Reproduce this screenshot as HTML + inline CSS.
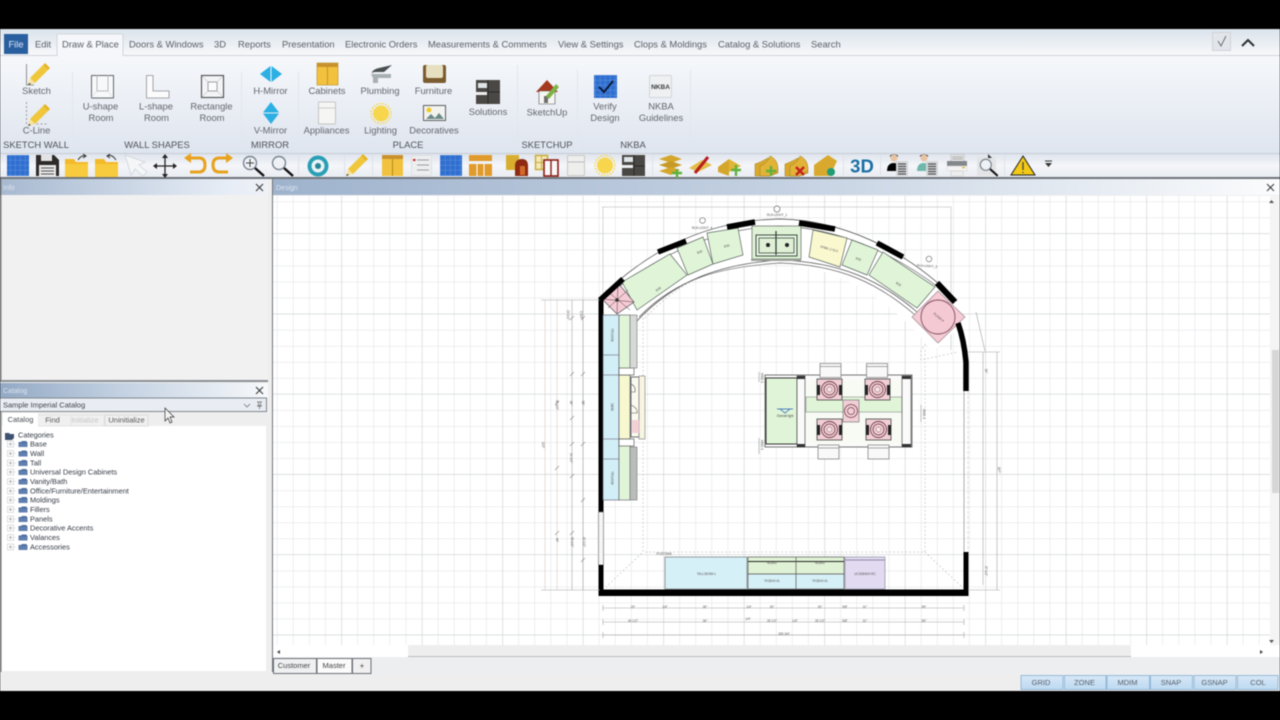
<!DOCTYPE html>
<html lang="en"><head><meta charset="utf-8"><title>Kitchen Design</title>
<style>
html,body{margin:0;padding:0;background:#000;width:1280px;height:720px;overflow:hidden}
svg{display:block;position:absolute;left:0;top:0;filter:blur(.4px)}
text{font-family:"Liberation Sans",sans-serif}
.m{font-size:9.4px;fill:#5a5f66}
.r{font-size:9.4px;fill:#62666c;text-anchor:middle}
.g{font-size:9.4px;fill:#4f5358;text-anchor:middle}
.t{font-size:7.4px;fill:#333a44}
.b{font-size:7.5px;fill:#56606c;text-anchor:middle}
.d{font-size:3.2px;fill:#555;text-anchor:middle}
.dim{stroke:#a3a3a3;stroke-width:.6;fill:none}
.dash{stroke:#bdbdbd;stroke-width:.8;stroke-dasharray:1.5 2.5;fill:none}
</style></head><body>
<svg width="1280" height="720" viewBox="0 0 1280 720" xmlns="http://www.w3.org/2000/svg">
<defs>
<linearGradient id="tab" x1="0" y1="0" x2="0" y2="1"><stop offset="0" stop-color="#dbe3ec"/><stop offset="1" stop-color="#f7f8fa"/></linearGradient>
<linearGradient id="rib" x1="0" y1="0" x2="0" y2="1"><stop offset="0" stop-color="#f6f8fb"/><stop offset="1" stop-color="#dfe5ef"/></linearGradient>
<linearGradient id="tb" x1="0" y1="0" x2="0" y2="1"><stop offset="0" stop-color="#dde3ec"/><stop offset=".5" stop-color="#f4f6f9"/><stop offset="1" stop-color="#e7ebf1"/></linearGradient>
<linearGradient id="ttlc" x1="0" y1="0" x2="1" y2="0"><stop offset="0" stop-color="#9fb3cd"/><stop offset=".5" stop-color="#c4d1e2"/><stop offset="1" stop-color="#fbfcfd"/></linearGradient>
<linearGradient id="ttl" x1="0" y1="0" x2="1" y2="0"><stop offset="0" stop-color="#a7b9d0"/><stop offset=".85" stop-color="#e7edf6"/><stop offset="1" stop-color="#eef1f7"/></linearGradient>
<linearGradient id="ttl2" x1="0" y1="0" x2="1" y2="0"><stop offset="0" stop-color="#93a9c5"/><stop offset=".45" stop-color="#c3d1e2"/><stop offset="1" stop-color="#f7f9fb"/></linearGradient>
<linearGradient id="btn" x1="0" y1="0" x2="0" y2="1"><stop offset="0" stop-color="#d8e8f7"/><stop offset="1" stop-color="#bcd9f1"/></linearGradient>
<pattern id="grid" patternUnits="userSpaceOnUse" x="3.2" y="8.9" width="16.1" height="16.05"><path d="M0 0V16.05M0 0H16.1" stroke="#dedfe1" stroke-width="1" fill="none"/></pattern>
<pattern id="gridm" patternUnits="userSpaceOnUse" x="19.5" y="72.8" width="80.5" height="80.25"><path d="M0 0V80.25M0 0H80.5" stroke="#d0d2d5" stroke-width="1" fill="none"/></pattern>
<pattern id="bg" patternUnits="userSpaceOnUse" width="5" height="5"><rect width="5" height="5" fill="#2f6fd0"/><path d="M0 0V5M0 0H5" stroke="#6d9ce0" stroke-width=".7"/></pattern>
<g id="pencil"><path d="M0 0L13 -13L18 -8L5 5Z" fill="#f0c63a"/><path d="M0 0L5 5L-2 7Z" fill="#f6e3a0"/><path d="M-1 5L1 6L-2 7Z" fill="#333"/><path d="M13 -13L15 -15L20 -10L18 -8Z" fill="#e6b422"/></g>
<g id="folder"><path d="M0 4H9L11 7H23V22H0Z" fill="#f3b92a"/><path d="M0 9H23V22H0Z" fill="#f8cb3e"/></g>
<g id="mag"><circle cx="8" cy="8" r="6.5" fill="#eef2f6" stroke="#7c8590" stroke-width="1.4"/><path d="M13 13L22 21" stroke="#111" stroke-width="2.4"/></g>
<g id="arc"><path d="M0 21V9C6 7 9 5 13 3C20 5 23 11 23 18L15 21Z" fill="#d9a92e" stroke="#9c7a1f" stroke-width=".5"/><path d="M5 21V11C10 9 13 6 15 1C21 4 23 8 23 15L15 21Z" fill="#e1b337" stroke="#9c7a1f" stroke-width=".5"/></g>
<g id="fold"><path d="M0 1H2.5L3.5 0H8V1H9V6H0Z" fill="#4f6f9f"/><rect y="2" width="9" height="4" fill="#5f7fb0"/></g>
<g id="plus"><rect x="-3" y="-3" width="6" height="6" fill="#fff" stroke="#c5c8cb" stroke-width=".6"/><path d="M-1.7 0H1.7M0 -1.7V1.7" stroke="#888" stroke-width=".6"/><path d="M3 0H5" stroke="#ccc" stroke-width=".6"/></g>
<g id="person"><circle cx="7" cy="4" r="3.5" fill="#e8c3a2"/><path d="M3 3Q7 -2 11 3L11 1.5Q7 -1 3 1.5Z" fill="#222"/><path d="M0 17Q0 9 7 9Q11 9 12 12V17Z"/><rect x="9" y="7" width="12" height="15" fill="#d5d7da"/><path d="M11 10H19M11 12.5H19M11 15H19M11 17.5H19M11 20H19" stroke="#555" stroke-width="1.2"/></g>
<g id="chair"><rect width="21" height="14" fill="#f9f9f9" stroke="#777" stroke-width=".7"/><path d="M0 3H21" stroke="#888" stroke-width=".8"/></g>
<g id="seat"><rect width="25" height="21" fill="#f1cfd6" stroke="#444" stroke-width=".8"/><rect y="6" width="3" height="10" fill="#222"/><rect x="22" y="6" width="3" height="10" fill="#222"/><circle cx="12.5" cy="10.5" r="8" fill="none" stroke="#703b45" stroke-width=".9"/><circle cx="12.5" cy="10.5" r="5.5" fill="none" stroke="#703b45" stroke-width=".8"/><circle cx="12.5" cy="10.5" r="2.5" fill="#f7e8ea" stroke="#8b5059" stroke-width=".5"/></g>
</defs>

<rect width="1280" height="720" fill="#000"/>
<rect y="29" width="1280" height="662" fill="#f0f0f0"/>

<!-- menu -->
<rect y="29" width="1280" height="26" fill="url(#tab)"/>
<rect y="55" width="1280" height="98" fill="url(#rib)"/>
<path d="M0 55.5H57M123 55.5H1280" stroke="#cfd5dc"/>
<rect x="4" y="34" width="24" height="20" fill="#2a5f9f"/>
<path d="M57 56V34H123V56" fill="#f5f7fa" stroke="#d0d6dd"/>
<text x="16" y="47.5" text-anchor="middle" class="m" style="fill:#d8e6f5">File</text>
<text x="35" y="47.5" class="m">Edit</text>
<text x="62" y="47.5" class="m">Draw &amp; Place</text>
<text x="129" y="47.5" class="m">Doors &amp; Windows</text>
<text x="214" y="47.5" class="m">3D</text>
<text x="238" y="47.5" class="m">Reports</text>
<text x="282" y="47.5" class="m">Presentation</text>
<text x="345" y="47.5" class="m">Electronic Orders</text>
<text x="428" y="47.5" class="m">Measurements &amp; Comments</text>
<text x="558" y="47.5" class="m">View &amp; Settings</text>
<text x="634" y="47.5" class="m">Clops &amp; Moldings</text>
<text x="718" y="47.5" class="m">Catalog &amp; Solutions</text>
<text x="811" y="47.5" class="m">Search</text>
<rect x="1212.5" y="32.5" width="18" height="18" fill="#e2e5ea" stroke="#d0d4da"/>
<path d="M1218 41L1221 46L1226 36" fill="none" stroke="#6d7277" stroke-width="1"/>
<path d="M1242 46L1248 40L1254 46" fill="none" stroke="#2c2f33" stroke-width="2"/>

<!-- ribbon separators -->
<path d="M72.5 72V150M241.5 72V150M298.5 72V150M517.5 65V152M577.5 70V152M690.5 70V152" stroke="#e2e7ee"/>

<!-- sketch -->
<path d="M26.5 64V85H34" fill="none" stroke="#777" stroke-width=".8"/>
<use href="#pencil" x="30" y="78"/>
<path d="M26.5 102V124H48" fill="none" stroke="#888" stroke-width=".8" stroke-dasharray="2 2"/>
<use href="#pencil" x="30" y="119"/>
<text x="36.5" y="94" class="r">Sketch</text>
<text x="36.5" y="133.5" class="r">C-Line</text>

<!-- room shapes -->
<rect x="91.5" y="75.5" width="22" height="22.5" fill="#f7f8fa" stroke="#55585c" stroke-width=".9"/>
<path d="M97 75V91H108V75" fill="none" stroke="#a5a8ad" stroke-width=".8"/>
<path d="M91 98L97 91M113 98L108 91" stroke="#c9ccd1" stroke-width=".5"/>
<path d="M146.5 75.5H153V91H169V98H146.5Z" fill="#fbfbfc" stroke="#8c9095" stroke-width=".8"/>
<rect x="201.5" y="75.5" width="22" height="22" fill="#f3f4f6" stroke="#4c4f53" stroke-width="1.1"/>
<rect x="208" y="82" width="9" height="9" fill="#fbfbfb" stroke="#8b8e93" stroke-width=".8"/>
<path d="M202 76L208 82M223 76L217 82M202 97L208 91M223 97L217 91" stroke="#aaa" stroke-width=".5"/>
<text x="100.5" y="109.5" class="r">U-shape</text><text x="101" y="121" class="r">Room</text>
<text x="156" y="109.5" class="r">L-shape</text><text x="156.5" y="121" class="r">Room</text>
<text x="211.5" y="109.5" class="r">Rectangle</text><text x="212" y="121" class="r">Room</text>
<text x="157" y="148" class="g">WALL SHAPES</text>
<text x="36" y="148" class="g">SKETCH WALL</text>

<!-- mirror -->
<path d="M260 74L270.5 66V82ZM271.5 66L282 74L271.5 82Z" fill="#2cb0e4"/>
<path d="M271 102L279 112.5H263ZM263 113.5H279L271 124Z" fill="#2cb0e4"/>
<text x="270.5" y="94" class="r">H-Mirror</text>
<text x="270.5" y="133.5" class="r">V-Mirror</text>
<text x="270" y="148" class="g">MIRROR</text>

<!-- place -->
<rect x="317" y="63" width="21" height="22" fill="#f2c23f" stroke="#b48a20" stroke-width=".6"/>
<rect x="317" y="63" width="21" height="4" fill="#c8912b"/>
<path d="M327.5 67V85" stroke="#b48a20" stroke-width=".8"/>
<rect x="318.5" y="102" width="17" height="22" rx="1" fill="#f5f5f4" stroke="#c4c4c2"/>
<path d="M319 108H335" stroke="#ccc"/>
<path d="M372 75Q371 72 376 72H384L392 65L379 68Q374 69 372 72Z" fill="#4a4f50"/>
<path d="M371 74H391V78H378V83H373V78Z" fill="#a9b0b2"/>
<rect x="423" y="65" width="23" height="18" rx="2" fill="#7b5b30"/>
<rect x="426" y="65" width="17" height="13" rx="2" fill="#e6dfc0"/>
<circle cx="381" cy="113.5" r="8" fill="#f7d64e"/>
<circle cx="381" cy="113.5" r="10" fill="none" stroke="#f7d64e" stroke-width="1.5" stroke-dasharray="1.5 1.5"/>
<rect x="423.5" y="105.5" width="22" height="15" fill="#f2f2ef" stroke="#5d5f61" stroke-width="1"/>
<circle cx="429" cy="110" r="2.5" fill="#f0c92b"/>
<path d="M426 119L431 114L435 118L439 113L444 119Z" fill="#6b8a87"/>
<rect x="476" y="80" width="24" height="24" fill="#4a4845"/>
<rect x="478" y="83" width="9" height="5" fill="#dfe5e6"/>
<rect x="476" y="92" width="11" height="3" fill="#eef0f0"/>
<path d="M488 80V104M488 92H500" stroke="#2c2b29"/>
<text x="327" y="94" class="r">Cabinets</text>
<text x="380" y="94" class="r">Plumbing</text>
<text x="433.5" y="94" class="r">Furniture</text>
<text x="326.5" y="133.5" class="r">Appliances</text>
<text x="380.5" y="133.5" class="r">Lighting</text>
<text x="434" y="133.5" class="r">Decoratives</text>
<text x="488" y="115" class="r">Solutions</text>
<text x="408" y="148" class="g">PLACE</text>

<!-- sketchup -->
<path d="M536 92L547 80L558 92Z" fill="#a5391f"/>
<path d="M539 91H555V104H539Z" fill="#f6f6f4" stroke="#555" stroke-width=".6"/>
<rect x="544" y="96" width="4" height="7" fill="#6e6e6e"/>
<path d="M546 96L556 84L559 87L549 99Z" fill="#7eb347"/>
<text x="547" y="115.5" class="r">SketchUp</text>
<text x="547" y="148" class="g">SKETCHUP</text>

<!-- NKBA -->
<rect x="594" y="75" width="23" height="23" fill="url(#bg)"/>
<path d="M599 87L604 92L613 81" fill="none" stroke="#0b1530" stroke-width="1.8"/>
<rect x="649.5" y="75.5" width="22" height="22" rx="1" fill="#eef0f1" stroke="#d2d5d8"/>
<text x="660.5" y="89" text-anchor="middle" style="font-size:6.5px;font-weight:bold;fill:#3c3f42">NKBA</text>
<text x="605" y="109.5" class="r">Verify</text><text x="605" y="121" class="r">Design</text>
<text x="661" y="109.5" class="r">NKBA</text><text x="661" y="121" class="r">Guidelines</text>
<text x="633" y="148" class="g">NKBA</text>

<!-- toolbar -->
<rect y="153" width="1280" height="25" fill="url(#tb)"/>
<path d="M0 153.5H1280" stroke="#c7ccd4"/>
<rect y="177" width="1280" height="2" fill="#6f747a"/>
<rect x="7" y="155" width="22" height="21" fill="url(#bg)"/>
<path d="M36 155H54L59 160V176H36Z" fill="#2d2a28"/><rect x="41" y="155" width="11" height="6" fill="#e3e3e3"/><rect x="39" y="165" width="17" height="11" fill="#e8e8e8"/><path d="M41 168H54M41 171H54M41 174H54" stroke="#555"/>
<use href="#folder" x="65" y="155"/><path d="M78 160Q81 155 85 156M83 154L86 156L83 158" fill="none" stroke="#333" stroke-width="1"/>
<use href="#folder" x="95" y="155"/><path d="M116 160Q112 154 108 156M110 154L107 156L110 158" fill="none" stroke="#333" stroke-width="1"/>
<path d="M125 155L131 175L135 169L143 176L147 172L139 165L145 162Z" fill="#f5f6f8" stroke="#ced2d7" stroke-width=".8"/>
<path d="M165 156V176M155 166H175" stroke="#222" stroke-width="1.3"/><path d="M165 154L168 158H162ZM165 178L168 174H162ZM153 166L157 163V169ZM177 166L173 163V169Z" fill="#222"/>
<path d="M188 158H199Q205 158 205 165Q205 172 199 172H190" fill="none" stroke="#e8a21e" stroke-width="3"/><path d="M184 158L191 153V163Z" fill="#e8a21e"/>
<path d="M229 158H219Q213 158 213 165Q213 172 219 172H228" fill="none" stroke="#e8a21e" stroke-width="3"/><path d="M233 158L226 153V163Z" fill="#e8a21e"/>
<use href="#mag" x="242" y="155"/><path d="M246 163H254M250 159V167" stroke="#444"/>
<use href="#mag" x="271" y="155"/>
<circle cx="318" cy="166" r="10.5" fill="#2a9fb5"/><circle cx="318" cy="166" r="6.5" fill="#e8f3f5"/><circle cx="318" cy="166" r="3" fill="#2a8699"/>
<path d="M344.5 156V175M372.5 156V175M298.5 156V175" stroke="#dde1e6"/>
<use href="#pencil" x="348" y="169"/>
<rect x="382" y="155" width="21" height="21" fill="#f2c23f"/><rect x="382" y="155" width="21" height="4" fill="#c8912b"/><path d="M392.5 159V176" stroke="#b48a20"/>
<rect x="411.5" y="155.5" width="20" height="20" rx="1" fill="#eceeef" stroke="#dcdfe1"/><path d="M417 160H429M417 165H429M417 170H429" stroke="#9a9ea1"/><rect x="413" y="159" width="2.5" height="2" fill="#c22"/>
<rect x="440" y="155" width="22" height="21" fill="url(#bg)"/>
<rect x="469" y="155" width="23" height="6" fill="#e09b2c"/><rect x="469" y="164" width="23" height="12" fill="#e09b2c"/><path d="M477 164V176M484 164V176" stroke="#fff"/>
<rect x="506" y="155" width="13" height="15" fill="#d9ad2e"/><path d="M515 176V166Q515 159 522 159Q528 159 528 166V176Z" fill="#8e2a12"/><rect x="520" y="166" width="5" height="9" fill="#d26a2c"/>
<rect x="535.5" y="155.5" width="12" height="14" fill="#f3e9b7" stroke="#c8a93a" stroke-width="1.4"/><path d="M541.5 156V169M536 162.5H547" stroke="#c8a93a"/>
<rect x="544" y="160" width="14" height="16" fill="#f9f9f9" stroke="#8c1c14" stroke-width="1.6"/><path d="M551 160V176" stroke="#8c1c14" stroke-width="1.4"/>
<rect x="567.5" y="155.5" width="17" height="20" rx="1" fill="#eeeeec" stroke="#c8c8c6"/><path d="M568 162H584" stroke="#bbb"/>
<circle cx="605" cy="165.5" r="8" fill="#f7d64e"/><circle cx="605" cy="165.5" r="10" fill="none" stroke="#f7d64e" stroke-width="1.5" stroke-dasharray="1.5 1.5"/>
<rect x="622" y="155" width="23" height="21" fill="#4a4845"/><rect x="624" y="157" width="9" height="5" fill="#dfe5e6"/><rect x="622" y="165" width="11" height="3" fill="#eef0f0"/><path d="M634 155V176M634 166H645" stroke="#2c2b29"/>
<path d="M652.5 156V175M843.5 156V175M880.5 156V175M1004.5 156V175" stroke="#dde1e6"/>
<path d="M659 159L671 155L682 159L671 163Z" fill="#d4a72c"/><path d="M659 165L671 161L682 165L671 169Z" fill="#c69a27"/><path d="M659 171L671 167L680 170L671 175Z" fill="#d4a72c"/><path d="M677 169V178M672 173H682" stroke="#5fb23c" stroke-width="2.4"/>
<path d="M689 168L702 160L712 165L698 172Z" fill="#e3bd4a"/><path d="M695 173L708 157" stroke="#b81e1e" stroke-width="3"/>
<path d="M718 167L729 159V176L718 172Z" fill="#d4a72c"/><path d="M729 159L741 166L729 172Z" fill="#e0b538"/><path d="M736 165V176M731 170H741" stroke="#5fb23c" stroke-width="2.4"/>
<use href="#arc" x="755" y="155"/><path d="M771 166V176M766 171H776" stroke="#5fb23c" stroke-width="2.4"/>
<use href="#arc" x="785" y="155"/><path d="M796 167L804 175M804 167L796 175" stroke="#c51f1f" stroke-width="2.4"/>
<path d="M814 176V165L828 155L837 161L830 176Z" fill="#d9a92e"/><circle cx="831" cy="172" r="4" fill="#1f9c73"/>
<text x="862" y="172.5" text-anchor="middle" style="font-size:18.5px;font-weight:bold;fill:#1a6fa5">3D</text>
<use href="#person" x="887" y="154"/>
<use href="#person" x="917" y="154" fill="#6fb7ab"/>
<rect x="951" y="155" width="13" height="6" fill="#fafafa" stroke="#999" stroke-width=".5"/><path d="M952 157H963M952 159H963" stroke="#777" stroke-width=".8"/>
<rect x="947" y="161" width="20" height="5" fill="#85888b"/><rect x="947" y="166" width="20" height="5" fill="#f3f3f3" stroke="#ccc" stroke-width=".4"/><rect x="951" y="171" width="12" height="5" fill="#ededed" stroke="#bbb" stroke-width=".4"/><rect x="962" y="167" width="3" height="1.2" fill="#e0b030"/>
<rect x="977" y="157" width="19" height="19" fill="#e3e4e5"/><g transform="translate(979 158) scale(.85)"><use href="#mag"/></g><path d="M988 154L992 158H988Z" fill="#333"/>
<path d="M1023 156L1035 175H1011Z" fill="#f2c916" stroke="#1f1f1f" stroke-width="1"/><path d="M1023 162V170" stroke="#444" stroke-width="1.3"/><circle cx="1023" cy="172.5" r=".7" fill="#444"/>
<path d="M1045 161H1052" stroke="#333"/><path d="M1045 163H1052L1048.5 167Z" fill="#333"/>

<!-- left panel -->
<rect y="179" width="272" height="512" fill="#eeeeee"/>
<rect y="179" width="268" height="16" fill="url(#ttl)"/>
<text x="3" y="190" style="font-size:7px;fill:#dbe4ef">Info</text>
<path d="M256 184L263 191M263 184L256 191" stroke="#3a3a3a" stroke-width="1.1"/>
<rect y="195" width="268" height="185" fill="#f1f1f1"/>
<path d="M1 179V380" stroke="#777"/>
<rect y="380" width="268" height="2" fill="#8a8f95"/>
<rect y="383" width="268" height="15" fill="url(#ttl2)"/>
<text x="3" y="393" style="font-size:7px;fill:#dbe4ef">Catalog</text>
<path d="M256 387L263 394M263 387L256 394" stroke="#3a3a3a" stroke-width="1.1"/>
<rect y="398" width="267" height="14" fill="#e9edf3"/>
<path d="M0 398H267M0 411.5H267M266.5 398V412" stroke="#7f8790"/>
<text x="3" y="407.5" style="font-size:7.5px;fill:#3d424a">Sample Imperial Catalog</text>
<path d="M244 404L247 407L250 404" stroke="#777" fill="none" stroke-width=".8"/>
<path d="M257 402H262M258.5 403V406H260.5V403M257 406H262M259.5 406V409" stroke="#555" fill="none" stroke-width=".7"/>
<rect x="2" y="426" width="264" height="245" fill="#fff"/>
<rect x="38" y="415" width="33" height="11" fill="#f0f0f0" stroke="#e4e4e4"/>
<rect x="71" y="415" width="33" height="11" fill="#f0f0f0" stroke="#e4e4e4"/>
<rect x="105" y="415" width="43" height="11" fill="#f0f0f0" stroke="#dcdcdc"/>
<rect x="3" y="413" width="35" height="14" fill="#fff"/>
<text x="20.5" y="422" text-anchor="middle" style="font-size:7.5px;fill:#454a51">Catalog</text>
<text x="52.5" y="422.5" text-anchor="middle" style="font-size:7.5px;fill:#555">Find</text>
<text x="85" y="422.5" text-anchor="middle" style="font-size:7.5px;fill:#c5c5c5">Initialize</text>
<text x="126.5" y="422.5" text-anchor="middle" style="font-size:7.5px;fill:#555">Uninitialize</text>
<path d="M5 433H9L10 434H14V438L12 440H5Z" fill="#3f5170"/>
<text x="18" y="437.5" class="t">Categories</text>
<use href="#plus" x="10.5" y="444"/><use href="#fold" x="18.5" y="441"/><text x="30" y="446.5" class="t">Base</text>
<use href="#plus" x="10.5" y="453.5"/><use href="#fold" x="18.5" y="450.5"/><text x="30" y="456" class="t">Wall</text>
<use href="#plus" x="10.5" y="463"/><use href="#fold" x="18.5" y="460"/><text x="30" y="465.5" class="t">Tall</text>
<use href="#plus" x="10.5" y="472"/><use href="#fold" x="18.5" y="469"/><text x="30" y="474.5" class="t">Universal Design Cabinets</text>
<use href="#plus" x="10.5" y="481.5"/><use href="#fold" x="18.5" y="478.5"/><text x="30" y="484" class="t">Vanity/Bath</text>
<use href="#plus" x="10.5" y="491"/><use href="#fold" x="18.5" y="488"/><text x="30" y="493.5" class="t">Office/Furniture/Entertainment</text>
<use href="#plus" x="10.5" y="500"/><use href="#fold" x="18.5" y="497"/><text x="30" y="502.5" class="t">Moldings</text>
<use href="#plus" x="10.5" y="509.5"/><use href="#fold" x="18.5" y="506.5"/><text x="30" y="512" class="t">Fillers</text>
<use href="#plus" x="10.5" y="519"/><use href="#fold" x="18.5" y="516"/><text x="30" y="521.5" class="t">Panels</text>
<use href="#plus" x="10.5" y="528"/><use href="#fold" x="18.5" y="525"/><text x="30" y="530.5" class="t">Decorative Accents</text>
<use href="#plus" x="10.5" y="537.5"/><use href="#fold" x="18.5" y="534.5"/><text x="30" y="540" class="t">Valances</text>
<use href="#plus" x="10.5" y="547"/><use href="#fold" x="18.5" y="544"/><text x="30" y="549.5" class="t">Accessories</text>
<path d="M165 408V421L168 418L170 423L172 422L170 417H174Z" fill="#f4f4f4" stroke="#333" stroke-width=".7"/>
<path d="M1 412V672" stroke="#777"/>

<!-- canvas -->
<rect x="272" y="179" width="1008" height="495" fill="#f0f0f0"/>
<rect x="273" y="179" width="1007" height="16" fill="url(#ttlc)"/>
<text x="276" y="190" style="font-size:7px;fill:#dbe4ef">Design</text>
<path d="M1267 184L1274 191M1274 184L1267 191" stroke="#3a3a3a" stroke-width="1"/>
<rect x="273" y="196" width="997" height="449" fill="#fff"/>
<rect x="273" y="196" width="997" height="449" fill="url(#grid)"/>
<rect x="273" y="196" width="997" height="449" fill="url(#gridm)"/>
<path d="M272.5 179V672" stroke="#6f747a"/>

<!-- scrollbars -->
<rect x="1270" y="196" width="10" height="449" fill="#f4f4f4"/>
<rect x="1272" y="350" width="7" height="143" fill="#d6d6d6"/>
<path d="M1269 203L1271.5 200L1274 203ZM1269 640L1271.5 643L1274 640Z" fill="#555"/>
<rect x="273" y="645" width="1007" height="12" fill="#fff"/>
<rect x="408" y="645" width="723" height="12" fill="#eeeeee"/>
<path d="M408 656.5H1131" stroke="#bdbdbd"/>
<path d="M280 650V654L277 652ZM1260 650V654L1263 652Z" fill="#444"/>
<rect x="273" y="657" width="1007" height="16" fill="#eceef0"/>
<rect x="273.5" y="658.5" width="43" height="15" fill="#eef0f2" stroke="#6b7077"/>
<rect x="317" y="658.5" width="35" height="15" fill="#fbfbfb" stroke="#6b7077"/>
<rect x="352.5" y="658.5" width="18.5" height="15" fill="#f0f0f0" stroke="#6b7077"/>
<text x="294" y="668" text-anchor="middle" style="font-size:7.5px;fill:#444">Customer</text>
<text x="334" y="668" text-anchor="middle" style="font-size:7.5px;fill:#444">Master</text>
<text x="362" y="668.5" text-anchor="middle" style="font-size:8px;fill:#444">+</text>

<!-- status bar -->
<rect y="674" width="1280" height="17" fill="#eeeeee"/>
<g stroke="#95b9d8" fill="url(#btn)">
<rect x="1021" y="675.5" width="42" height="14"/><rect x="1064.5" y="675.5" width="41.5" height="14"/><rect x="1107" y="675.5" width="42.5" height="14"/><rect x="1150.5" y="675.5" width="42" height="14"/><rect x="1194" y="675.5" width="42" height="14"/><rect x="1237.5" y="675.5" width="40.5" height="14"/>
</g>
<text x="1041" y="685" class="b">GRID</text><text x="1084.5" y="685" class="b">ZONE</text><text x="1127.5" y="685" class="b">MDIM</text><text x="1171" y="685" class="b">SNAP</text><text x="1214.5" y="685" class="b">GSNAP</text><text x="1258" y="685" class="b">COL</text>

<!-- floor plan: guides -->
<path d="M602 207H951V350M603 207V300" fill="none" stroke="#c8c8c8" stroke-width=".7"/>
<path class="dash" d="M645 318Q690 270 748 264Q780 262 810 264Q870 272 922 318Q937 332 921 350V360L958 352"/>
<path class="dash" d="M643 318V552L606 587M925 350V552H643M925 552L962 587"/>

<!-- arc band -->
<path d="M600 298C650 248 710 220 780 219C840 220 905 248 957 301L963 323L933 352C900 310 850 268 780 264C720 262 675 280 636 322L604 318Z" fill="#fff"/>
<path d="M600 298C650 248 710 220 780 219C840 220 905 248 957 301" fill="none" stroke="#444" stroke-width=".7"/>
<path d="M616 289C665 251 720 228 780 226C835 228 890 250 942 290" fill="none" stroke="#666" stroke-width=".7"/>
<path d="M636 322C675 280 720 264 780 260C840 262 880 280 917 312" fill="none" stroke="#555" stroke-width=".8"/>
<path d="M639 317C678 277 722 267 780 263C840 265 878 283 915 315" fill="none" stroke="#666" stroke-width=".7"/>

<!-- arc cabinets -->
<path d="M622 282L670 254L687 275L637 310Z" fill="#e0f5d8" stroke="#5c6660" stroke-width=".7"/>
<path d="M677 248L703 237L713 264L688 275Z" fill="#e0f5d8" stroke="#5c6660" stroke-width=".7"/>
<path d="M707 233L738 228L743 255L713 264Z" fill="#e0f5d8" stroke="#5c6660" stroke-width=".7"/>
<path d="M813 230L847 238L840 267L809 257Z" fill="#f9f8cf" stroke="#5c6660" stroke-width=".7"/>
<path d="M852 240L878 250L867 275L842 265Z" fill="#e0f5d8" stroke="#5c6660" stroke-width=".7"/>
<path d="M883 252L935 287L917 308L869 275Z" fill="#e0f5d8" stroke="#5c6660" stroke-width=".7"/>

<!-- sink cabinet -->
<rect x="752" y="226" width="49" height="33" fill="#e0f2d6" stroke="#666" stroke-width=".7"/>
<rect x="756" y="235" width="41" height="21" fill="#eef4e8" stroke="#34503b" stroke-width="1"/>
<rect x="759" y="238" width="35" height="15" fill="#dff0d6" stroke="#34503b" stroke-width=".8"/>
<path d="M776 231V255" stroke="#2a3a2f" stroke-width="1.2"/><circle cx="768" cy="245" r="2" fill="#222"/><circle cx="787" cy="245" r="2" fill="#222"/>
<rect x="751" y="259" width="50" height="2" fill="#9aa199"/>

<!-- arc labels -->
<text class="d" transform="translate(659 290) rotate(-35)">B36</text>
<text class="d" transform="translate(700 253) rotate(-20)">B30</text>
<text class="d" transform="translate(727 247) rotate(-12)">B30</text>
<text class="d" transform="translate(829 250) rotate(14)">FPBK-2-SLS</text>
<text class="d" transform="translate(858 260) rotate(22)">B30</text>
<text class="d" transform="translate(898 285) rotate(33)">B36</text>

<!-- corner pieces -->
<path d="M618 283L634 302L617 314L602 299Z" fill="#f5ccd6" stroke="#555" stroke-width=".7"/>
<path d="M602 299L634 302M618 283L617 314M606 290L630 310M628 290L608 308" stroke="#553a42" stroke-width=".5"/>
<circle cx="617" cy="300" r="1.8" fill="#333"/>
<path d="M938 291L965 317L938 343L912 317Z" fill="#f5ccd6" stroke="#9d8a8f" stroke-width=".7"/>
<circle cx="938" cy="317" r="17" fill="#f5c9d3" stroke="#7b4d59" stroke-width=".9"/>
<text class="d" transform="translate(938 318) rotate(40)">PLN30-4</text>

<!-- walls -->
<g stroke="#000" fill="none" stroke-width="5.5">
<path d="M600 300L623 279"/>
<path d="M658 252L686 241"/>
<path d="M727 227L755 222"/>
<path d="M799 223L835 229"/>
<path d="M877 243L903 257"/>
<path d="M937 283L955 302" stroke-width="6"/>
<path d="M958 323Q964 340 966 362V391"/>
</g>
<rect x="598.5" y="298" width="5" height="214" fill="#000"/>
<rect x="598.5" y="512" width="5" height="53" fill="#f5f5f5" stroke="#777" stroke-width=".7"/>
<rect x="598.5" y="565" width="5" height="30" fill="#000"/>
<rect x="598.5" y="589.5" width="370" height="6.5" fill="#000"/>
<rect x="963.5" y="552" width="5" height="40" fill="#000"/>
<path d="M964 391V552" stroke="#999" stroke-width=".8"/>
<path d="M968 391V552" stroke="#c8c8c8" stroke-width=".6" stroke-dasharray="3 2"/>

<!-- left run -->
<rect x="603" y="315" width="16" height="185" fill="#d2eef6" stroke="#556" stroke-width=".6"/>
<path d="M603 355H619M603 375H619M603 439H619M603 459H619" stroke="#556" stroke-width=".6"/>
<rect x="619" y="315" width="11" height="185" fill="#e0f5d8" stroke="#556" stroke-width=".6"/>
<rect x="619" y="375" width="11" height="64" fill="#f7f8cf" stroke="#556" stroke-width=".6"/>
<rect x="619" y="368" width="15" height="7" fill="#fff" stroke="#444" stroke-width=".6"/>
<rect x="619" y="439" width="15" height="7" fill="#fff" stroke="#444" stroke-width=".6"/>
<rect x="630" y="315" width="7" height="53" fill="#d7d9d6" stroke="#777" stroke-width=".6"/>
<rect x="630" y="447" width="7" height="53" fill="#b9bcb9" stroke="#777" stroke-width=".6"/>
<rect x="631" y="377" width="8" height="60" fill="#fafaf0" stroke="#333" stroke-width=".7"/>
<rect x="639" y="376" width="6" height="63" fill="#f7f6e0" stroke="#888" stroke-width=".7"/>
<rect x="632" y="420" width="7" height="13" fill="#f3cfd6"/>
<path d="M631 384Q636 386 635 392H631M631 405Q638 408 637 413H631" fill="none" stroke="#555" stroke-width=".6"/>
<text class="d" transform="translate(611 407) rotate(90)">SB36</text>
<text class="d" transform="translate(611 335) rotate(90)">TP24X96</text>
<text class="d" transform="translate(611 478) rotate(90)">TP24X96</text>

<!-- island -->
<rect x="765" y="375" width="147" height="72" fill="#fafafa" stroke="#555" stroke-width=".8"/>
<rect x="766" y="378" width="31" height="66" fill="#e0f5d8" stroke="#333" stroke-width="1"/>
<rect x="806" y="381" width="96" height="62" fill="#f7fbf4"/>
<rect x="806" y="397" width="96" height="15" fill="#e0f5d8" stroke="#777" stroke-width=".5"/>
<rect x="797" y="376" width="8" height="71" fill="#fafafa" stroke="#555" stroke-width=".7"/><rect x="797" y="376" width="8" height="3" fill="#333"/><rect x="797" y="444" width="8" height="3" fill="#333"/>
<rect x="902" y="376" width="9" height="71" fill="#fafafa" stroke="#555" stroke-width=".7"/><rect x="902" y="376" width="9" height="3" fill="#333"/><rect x="902" y="444" width="9" height="3" fill="#333"/>
<use href="#chair" x="820" y="363.5"/><use href="#chair" x="866.5" y="363.5"/>
<use href="#chair" x="818" y="445"/><use href="#chair" x="868" y="445"/>
<use href="#seat" x="817" y="379"/><use href="#seat" x="865" y="379"/><use href="#seat" x="817" y="419"/><use href="#seat" x="866" y="419"/>
<rect x="843" y="400" width="16" height="22" fill="#f1cfd6" stroke="#666" stroke-width=".6"/>
<circle cx="851" cy="411" r="6.5" fill="none" stroke="#703b45" stroke-width=".8"/><circle cx="851" cy="411" r="3.5" fill="none" stroke="#703b45" stroke-width=".7"/>
<path d="M777 409H793" stroke="#2d63b8" stroke-width=".8"/><path d="M780 409L785 413L790 409" fill="none" stroke="#2d63b8" stroke-width=".8"/>
<text x="785" y="417" class="d" style="fill:#444">Overall light</text>
<path d="M759 372V382M759 438V454M921 405V422" stroke="#999" stroke-width=".6"/>
<text class="d" transform="translate(761 378) rotate(90)">MM2-1</text>
<text class="d" transform="translate(761 445) rotate(90)">MM2-1</text>
<text class="d" transform="translate(923 414) rotate(90)">MM2-1</text>

<!-- bottom run -->
<rect x="665" y="557" width="82" height="32" fill="#d6f0f7" stroke="#6f7675" stroke-width=".7"/>
<rect x="748" y="557" width="96" height="17" fill="#e0f2d6" stroke="#555" stroke-width=".7"/>
<rect x="748" y="574" width="96" height="15" fill="#d6f0f7" stroke="#555" stroke-width=".7"/>
<path d="M748 561.5H844" stroke="#222" stroke-width="1.1"/>
<path d="M796 557V589" stroke="#555" stroke-width=".7"/>
<rect x="845" y="557" width="40" height="32" fill="#e1daf1" stroke="#8e8ca2" stroke-width=".7"/>
<path d="M845 560H885" stroke="#8e8ca2"/>
<text x="706.5" y="575" class="d">TALL36X84-L</text>
<text x="772" y="564" class="d">W3642</text><text x="820" y="564" class="d">W3642</text>
<text x="772" y="582" class="d">TK36X4-0L</text><text x="820" y="582" class="d">TK36X4-0L</text>
<text x="865" y="575" class="d">UC3084D4-RC</text>
<text x="664" y="555" class="d">POST36W</text>

<!-- dimensions -->
<path class="dim" d="M603 608H964M603 622H964M603 635H964M603 605V611M964 605V611M603 619V625M964 619V625M603 632V638M964 632V638"/>
<text x="633" y="608" class="d">15"</text><text x="665" y="608" class="d">1/4"</text><text x="705" y="608" class="d">36"</text><text x="749" y="608" class="d">1/4"</text><text x="772" y="608" class="d">30"</text><text x="820" y="608" class="d">30"</text><text x="845" y="608" class="d">5/8"</text><text x="865" y="608" class="d">31"</text><text x="924" y="608" class="d">59"</text>
<text x="633" y="622" class="d">40 1/2"</text><text x="705" y="622" class="d">36"</text><text x="748" y="620" class="d">1/4"</text><text x="772" y="622" class="d">35 1/2"</text><text x="795" y="622" class="d">1/4"</text><text x="820" y="622" class="d">35 1/2"</text><text x="845" y="622" class="d">5/8"</text><text x="865" y="622" class="d">31"</text><text x="924" y="622" class="d">59"</text>
<text x="784" y="635" class="d">265 3/4"</text>
<path d="M545 300V590M557 300V590" fill="none" stroke="#d8c8c4" stroke-width=".6"/>
<path class="dim" d="M572 300V590M583 300V590M541 300H600M541 590H600"/>
<path d="M570 320L574 316M570 376L574 372M570 420L574 416M570 446L574 442M570 478L574 474M570 535L574 531M581 320L585 316M581 376L585 372M581 446L585 442M581 502L585 498M581 562L585 558M555 405L559 401M555 470L559 466M555 535L559 531" stroke="#888" stroke-width=".6"/>
<path class="dim" d="M983 352V585M997 352V590M968 352H1000M968 590H1000M976 312L985 351"/>
<text class="d" transform="translate(567 315) rotate(90)">24 1/2"</text><text class="d" transform="translate(580 315) rotate(90)">3 3/4"</text><text class="d" transform="translate(556 405) rotate(90)">31 1/2"</text><text class="d" transform="translate(542 445) rotate(90)">215"</text><text class="d" transform="translate(570 403) rotate(90)">36"</text><text class="d" transform="translate(582 403) rotate(90)">36"</text><text class="d" transform="translate(570 458) rotate(90)">24 1/2"</text><text class="d" transform="translate(556 540) rotate(90)">46"</text><text class="d" transform="translate(571 542) rotate(90)">39 1/2"</text><text class="d" transform="translate(583 542) rotate(90)">42 1/2"</text><text class="d" transform="translate(985 371) rotate(90)">39"</text><text class="d" transform="translate(998 470) rotate(90)">187"</text><text class="d" transform="translate(985 571) rotate(90)">37 1/2"</text>

<!-- ceiling lights -->
<circle cx="702.5" cy="220.5" r="2.8" fill="#fff" stroke="#666" stroke-width=".6"/>
<text x="702" y="229" class="d">RLN-LIGHT_4</text>
<circle cx="777" cy="209" r="3" fill="#fff" stroke="#666" stroke-width=".7"/>
<text x="777" y="216" class="d">RLN-LIGHT_1</text>
<circle cx="929" cy="259" r="2.8" fill="#fff" stroke="#666" stroke-width=".6"/>
<text class="d" transform="translate(927 267) rotate(4)">RLN-LIGHT_3</text>
</svg>
</body></html>
